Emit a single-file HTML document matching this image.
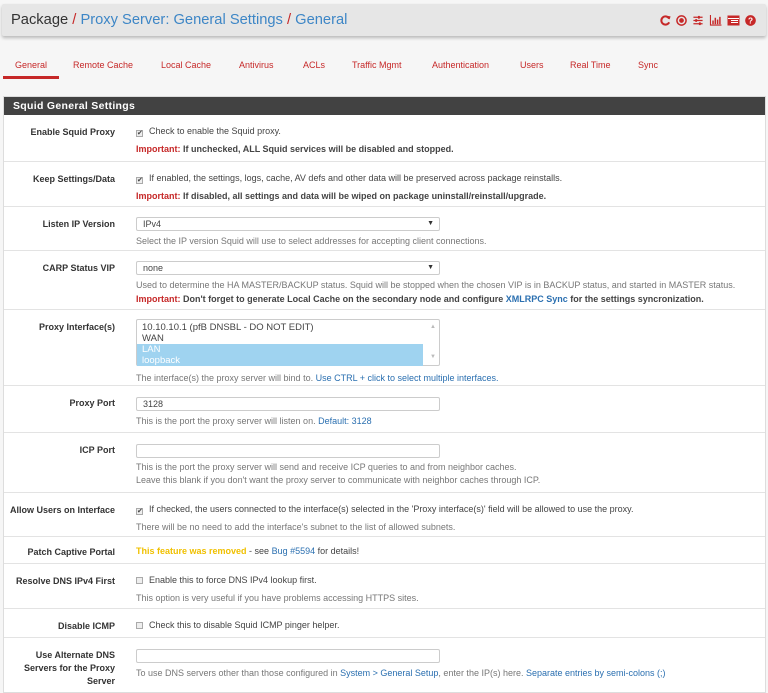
<!DOCTYPE html>
<html><head><meta charset="utf-8"><style>
*{box-sizing:border-box;margin:0;padding:0}
body{width:768px;height:693px;overflow:hidden;background:#f6f6f6;font-family:"Liberation Sans",sans-serif;font-size:9px;color:#333;position:relative}
.hdr{position:absolute;left:2px;top:4px;width:764px;height:32px;background:#e6e6e6;box-shadow:0 2px 3px rgba(0,0,0,.25);border-radius:2px}
.hdr .t{position:absolute;left:9px;top:8px;font-size:14.7px;color:#333}
.hdr .t a{color:#3d86c6}.hdr .t s{color:#c62828;text-decoration:none}
.icons{position:absolute;right:10px;top:11px;display:flex;gap:5px}
.tabs{position:absolute;top:60px;left:0;width:768px}
.tabs span{position:absolute;color:#c62828;font-size:9px}
.ul{position:absolute;left:3px;top:76px;width:56px;height:3px;background:#c62828}
.panel{position:absolute;left:3px;top:96px;width:763px;height:597px;background:#fff;border:1px solid #ddd}
.ph{height:18px;background:#424242;color:#fff;font-weight:bold;font-size:10.5px;padding:3px 0 0 9px;letter-spacing:.3px}
.row{position:relative;border-bottom:1px solid #e3e3e3}
.lb{position:absolute;right:650px;top:11px;font-weight:bold;text-align:right;width:110px;line-height:13px}
.c{position:absolute;left:132px;top:10px;width:625px;line-height:14px;color:#444}
.c1{display:block;height:17px;line-height:12px}
.h{color:#777}
.imp{color:#c62828;font-weight:bold}.b{font-weight:bold;color:#444}
.lnk{color:#2a6fb0}
.sel,.inp{width:304px;height:14px;border:1px solid #ccc;border-radius:2px;padding-left:6px;line-height:12px;font-size:9px;position:relative;margin:1px 0 3px}
.sel:after{content:"▼";position:absolute;right:5px;top:0;font-size:7px;color:#333}
.cb{display:inline-block;width:7px;height:7px;border:1px solid #aaa;margin:0 6px 0 0;vertical-align:-1px;font-size:7px;line-height:6px;text-align:center;background:#eee}
.ms{width:304px;height:47px;border:1px solid #ccc;border-radius:2px;position:relative;line-height:11px;font-size:9.5px;padding-top:2px;margin-bottom:5px}
.ms div{padding-left:5px;width:286px}
.ms .s{background:#9fd3f0;color:#fff}
</style></head><body>
<div class="hdr"><div class="t">Package <s>/</s> <a>Proxy Server: General Settings</a> <s>/</s> <a>General</a></div>
<div class="icons">
<svg width="11" height="11" viewBox="0 0 12 12"><path d="M10 4A4.5 4.5 0 1 0 10 8" fill="none" stroke="#c62828" stroke-width="2.2"/><path d="M8 1l3.5 0.5-1 3.5z" fill="#c62828"/></svg>
<svg width="11" height="11" viewBox="0 0 12 12"><circle cx="6" cy="6" r="5" fill="none" stroke="#c62828" stroke-width="1.6"/><circle cx="6" cy="6" r="2.6" fill="#c62828"/></svg>
<svg width="12" height="11" viewBox="0 0 12 12"><g stroke="#c62828" stroke-width="1.4"><path d="M1 2.5h10M1 6h10M1 9.5h10"/></g><g fill="#c62828"><rect x="6" y="1" width="2" height="3"/><rect x="3" y="4.5" width="2" height="3"/><rect x="7" y="8" width="2" height="3"/></g></svg>
<svg width="13" height="11" viewBox="0 0 13 12"><path d="M1 0v11h12" fill="none" stroke="#c62828" stroke-width="1.2"/><g fill="#c62828"><rect x="3" y="6" width="1.6" height="4"/><rect x="5.5" y="3" width="1.6" height="7"/><rect x="8" y="5" width="1.6" height="5"/><rect x="10.5" y="2" width="1.6" height="8"/></g></svg>
<svg width="13" height="11" viewBox="0 0 13 11"><rect x="0.5" y="0.5" width="12" height="10" fill="#c62828"/><g stroke="#fff" stroke-width="1"><path d="M1 3.5h11M4 5.5h7M4 7.5h7"/></g></svg>
<svg width="11" height="11" viewBox="0 0 12 12"><circle cx="6" cy="6" r="5.8" fill="#c62828"/><text x="6" y="9.5" font-size="9" font-weight="bold" fill="#fff" text-anchor="middle" font-family="Liberation Sans">?</text></svg>
</div></div>
<div class="tabs">
<span style="left:15px">General</span><span style="left:73px">Remote Cache</span><span style="left:161px">Local Cache</span><span style="left:239px">Antivirus</span><span style="left:303px">ACLs</span><span style="left:352px">Traffic Mgmt</span><span style="left:432px">Authentication</span><span style="left:520px">Users</span><span style="left:570px">Real Time</span><span style="left:638px">Sync</span>
</div>
<div class="ul"></div>
<div class="panel">
<div class="ph">Squid General Settings</div>
<div class="row" style="height:47px"><div class="lb">Enable Squid Proxy</div><div class="c" style="top:10px"><span class="c1"><span class="cb">✔</span>Check to enable the Squid proxy.</span><span class="imp">Important:</span> <span class="b">If unchecked, ALL Squid services will be disabled and stopped.</span></div></div>
<div class="row" style="height:45px"><div class="lb">Keep Settings/Data</div><div class="c" style="top:10px"><span class="c1"><span class="cb">✔</span>If enabled, the settings, logs, cache, AV defs and other data will be preserved across package reinstalls.</span><span class="imp">Important:</span> <span class="b">If disabled, all settings and data will be wiped on package uninstall/reinstall/upgrade.</span></div></div>
<div class="row" style="height:44px"><div class="lb">Listen IP Version</div><div class="c" style="top:9px"><div class="sel">IPv4</div><span class="h">Select the IP version Squid will use to select addresses for accepting client connections.</span></div></div>
<div class="row" style="height:59px"><div class="lb">CARP Status VIP</div><div class="c" style="top:9px"><div class="sel">none</div><span class="h">Used to determine the HA MASTER/BACKUP status. Squid will be stopped when the chosen VIP is in BACKUP status, and started in MASTER status.</span><br><span class="imp">Important:</span> <span class="b">Don't forget to generate Local Cache on the secondary node and configure <span class="lnk">XMLRPC Sync</span> for the settings syncronization.</span></div></div>
<div class="row" style="height:76px"><div class="lb">Proxy Interface(s)</div><div class="c" style="top:9px"><div class="ms"><div>10.10.10.1 (pfB DNSBL - DO NOT EDIT)</div><div>WAN</div><div class="s">LAN</div><div class="s">loopback</div><span style="position:absolute;right:3px;top:2px;font-size:6px;color:#bbb">▲</span><span style="position:absolute;right:3px;bottom:2px;font-size:6px;color:#bbb">▼</span></div><span class="h">The interface(s) the proxy server will bind to. <span class="lnk">Use CTRL + click to select multiple interfaces.</span></span></div></div>
<div class="row" style="height:47px"><div class="lb">Proxy Port</div><div class="c" style="top:10px"><div class="inp">3128</div><span class="h">This is the port the proxy server will listen on. <span class="lnk">Default: 3128</span></span></div></div>
<div class="row" style="height:60px"><div class="lb">ICP Port</div><div class="c" style="top:10px;line-height:13px"><div class="inp"></div><span class="h">This is the port the proxy server will send and receive ICP queries to and from neighbor caches.<br>Leave this blank if you don't want the proxy server to communicate with neighbor caches through ICP.</span></div></div>
<div class="row" style="height:44px"><div class="lb">Allow Users on Interface</div><div class="c" style="top:10px"><span class="c1"><span class="cb">✔</span>If checked, the users connected to the interface(s) selected in the 'Proxy interface(s)' field will be allowed to use the proxy.</span><span class="h">There will be no need to add the interface's subnet to the list of allowed subnets.</span></div></div>
<div class="row" style="height:27px"><div class="lb" style="top:9px">Patch Captive Portal</div><div class="c" style="top:7px"><span style="color:#f0c000;font-weight:bold">This feature was removed</span> - see <span class="lnk">Bug #5594</span> for details!</div></div>
<div class="row" style="height:45px"><div class="lb">Resolve DNS IPv4 First</div><div class="c" style="top:10px"><span class="c1"><span class="cb"></span>Enable this to force DNS IPv4 lookup first.</span><span class="h">This option is very useful if you have problems accessing HTTPS sites.</span></div></div>
<div class="row" style="height:29px"><div class="lb">Disable ICMP</div><div class="c" style="top:10px"><span class="c1"><span class="cb"></span>Check this to disable Squid ICMP pinger helper.</span></div></div>
<div class="row" style="height:55px;border:0"><div class="lb">Use Alternate DNS Servers for the Proxy Server</div><div class="c" style="top:10px"><div class="inp"></div><span class="h">To use DNS servers other than those configured in <span class="lnk">System &gt; General Setup</span>, enter the IP(s) here. <span class="lnk">Separate entries by semi-colons (;)</span></span></div></div>
</div>
</body></html>
